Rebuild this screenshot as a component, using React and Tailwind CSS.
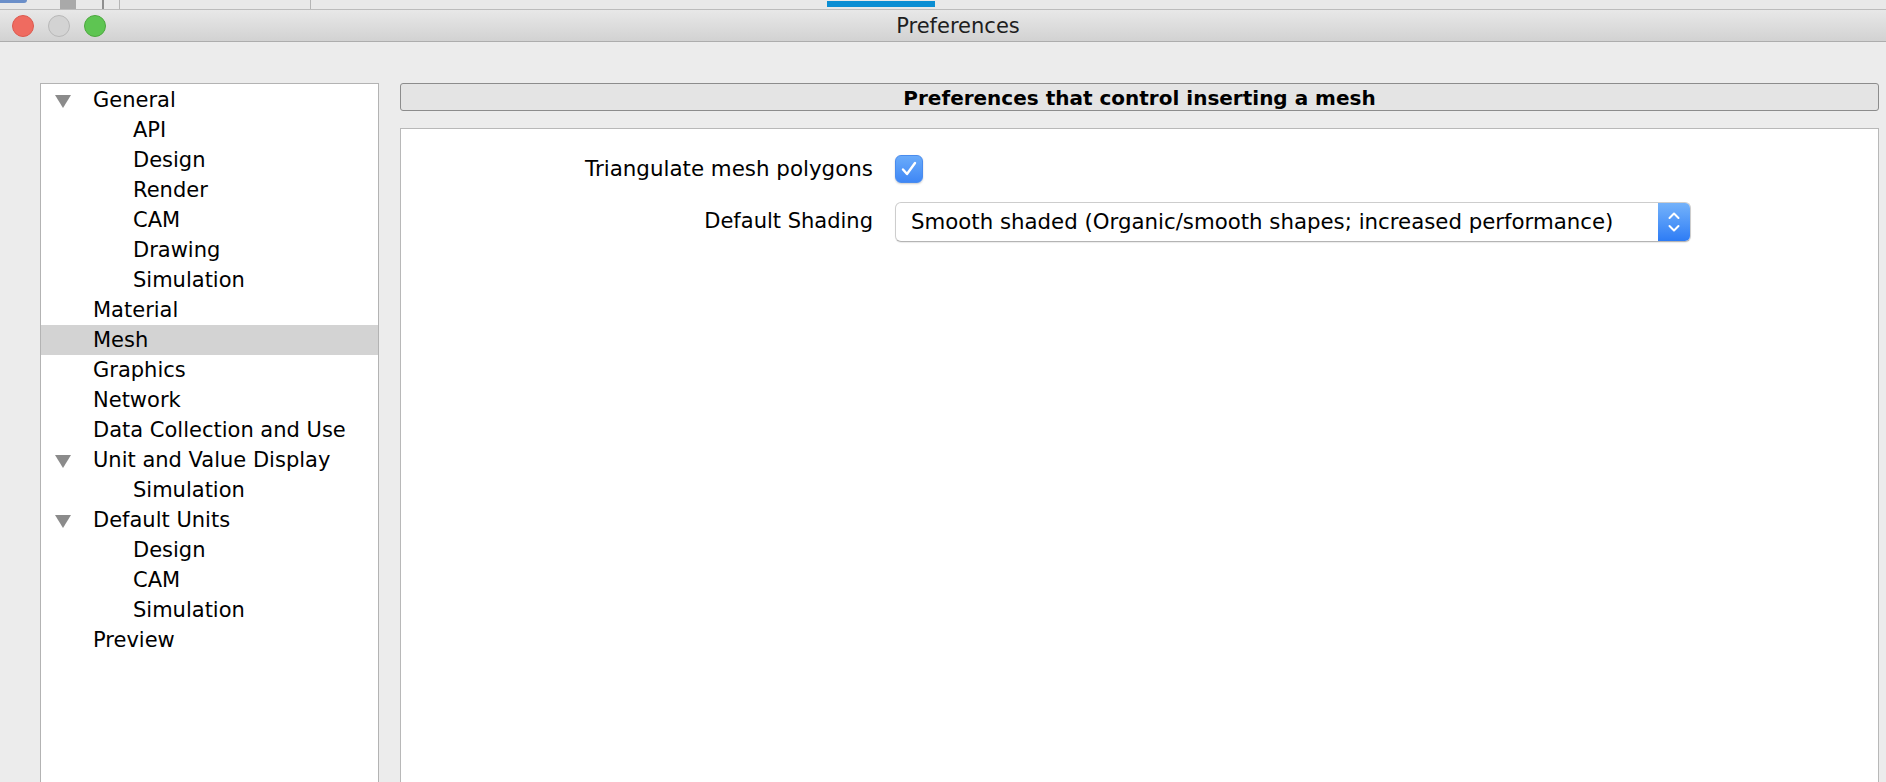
import React from "react";

const tree = [
  { label: "General", level: 0, open: true },
  { label: "API", level: 1 },
  { label: "Design", level: 1 },
  { label: "Render", level: 1 },
  { label: "CAM", level: 1 },
  { label: "Drawing", level: 1 },
  { label: "Simulation", level: 1 },
  { label: "Material", level: 0 },
  { label: "Mesh", level: 0, selected: true },
  { label: "Graphics", level: 0 },
  { label: "Network", level: 0 },
  { label: "Data Collection and Use", level: 0 },
  { label: "Unit and Value Display", level: 0, open: true },
  { label: "Simulation", level: 1 },
  { label: "Default Units", level: 0, open: true },
  { label: "Design", level: 1 },
  { label: "CAM", level: 1 },
  { label: "Simulation", level: 1 },
  { label: "Preview", level: 0 },
];

function TreeRow({ item }) {
  return (
    <div
      className={
        "flex h-[30px] items-center pl-[14px] pt-[2px] " +
        (item.selected ? "bg-[#d3d3d3]" : "")
      }
    >
      <div className="flex w-[38px] shrink-0 items-center">
        {item.open && (
          <svg width="16" height="13" viewBox="0 0 16 13">
            <polygon points="0,0 16,0 8,13" fill="#8b8b8b" />
          </svg>
        )}
      </div>
      <span className={item.level === 1 ? "ml-[40px]" : ""}>{item.label}</span>
    </div>
  );
}

export default function App() {
  return (
    <div
      className="flex h-[782px] w-[1886px] flex-col overflow-hidden bg-[#ececec] text-[21px] text-black"
      style={{ fontFamily: '"DejaVu Sans", "Liberation Sans", sans-serif' }}
    >
      {/* window behind */}
      <div className="flex h-[9px] shrink-0 bg-[#e9e9e9]">
        <div className="h-[3px] w-[27px] rounded-br-[4px] bg-[#6b8fc9]" />
        <div className="ml-[33px] h-full w-[16px] bg-[#a9a9a9]" />
        <div className="ml-[26px] h-full w-[2px] bg-[#8f8f8f]" />
        <div className="ml-[15px] h-full w-[1px] bg-[#b5b5b5]" />
        <div className="ml-[190px] h-full w-[1px] bg-[#b5b5b5]" />
        <div className="ml-[516px] mt-[1px] h-[6px] w-[108px] bg-[#0b8ed3]" />
      </div>

      {/* title bar */}
      <div className="flex h-[33px] shrink-0 items-center border-y border-t-[#bcbcbc] border-b-[#adadad] bg-gradient-to-b from-[#e8e8e8] to-[#d2d2d2] pl-[12px]">
        <div className="flex gap-[14px]">
          <div className="h-[22px] w-[22px] rounded-full border border-[#dc5a4f] bg-[#ef6b60]" />
          <div className="h-[22px] w-[22px] rounded-full border border-[#b8b8b8] bg-[#d3d3d3]" />
          <div className="h-[22px] w-[22px] rounded-full border border-[#4ca83e] bg-[#5ec552]" />
        </div>
        <div className="flex flex-1 justify-center pt-[2px] pr-[76px] text-[#1e1e1e]">
          Preferences
        </div>
      </div>

      {/* body */}
      <div className="flex flex-1 pt-[41px] pl-[40px] pr-[7px]">
        <div className="w-[339px] shrink-0 border border-b-0 border-[#b3b3b3] bg-white pt-[1px]">
          {tree.map((item, i) => (
            <TreeRow key={i} item={item} />
          ))}
        </div>

        <div className="ml-[21px] flex flex-1 flex-col">
          <div className="flex h-[28px] items-center justify-center rounded-[3px] border border-[#8c8c8c] bg-[#e4e4e4] pt-[2px] text-[20px] font-bold leading-none">
            Preferences that control inserting a mesh
          </div>

          <div className="mt-[17px] flex-1 border border-b-0 border-[#b8b8b8] bg-white pt-[24px]">
            <div className="grid grid-cols-[472px_auto] items-center gap-x-[22px] gap-y-[17px]">
              <div className="text-right text-[21.4px]">Triangulate mesh polygons</div>
              <div className="flex h-[30px] items-center">
                <div className="flex h-[28px] w-[28px] items-center justify-center rounded-[6px] border border-[#4a8cee] bg-gradient-to-b from-[#6aabfa] to-[#3f87f5] shadow-[0_1px_2px_rgba(0,0,0,0.2)]">
                  <svg width="20" height="18" viewBox="0 0 20 18">
                    <path
                      d="M4 9.5 L8 14 L16 3"
                      fill="none"
                      stroke="white"
                      strokeWidth="2.4"
                      strokeLinecap="round"
                      strokeLinejoin="round"
                    />
                  </svg>
                </div>
              </div>

              <div className="text-right">Default Shading</div>
              <div className="flex h-[40px] w-[796px] overflow-hidden rounded-[6px] border border-[#cdcdcd] border-b-[#b4b4b4] bg-white shadow-[0_1px_1px_rgba(0,0,0,0.08)]">
                <div className="flex flex-1 items-center pl-[15px] text-[21.3px]">
                  Smooth shaded (Organic/smooth shapes; increased performance)
                </div>
                <div className="flex w-[32px] items-center justify-center bg-gradient-to-b from-[#74b2fa] to-[#2d7cf5]">
                  <svg width="14" height="24" viewBox="0 0 14 24">
                    <path
                      d="M2.5 8 L7 3.5 L11.5 8 M2.5 16 L7 20.5 L11.5 16"
                      fill="none"
                      stroke="white"
                      strokeWidth="2"
                      strokeLinecap="round"
                      strokeLinejoin="round"
                    />
                  </svg>
                </div>
              </div>
            </div>
          </div>
        </div>
      </div>
    </div>
  );
}
